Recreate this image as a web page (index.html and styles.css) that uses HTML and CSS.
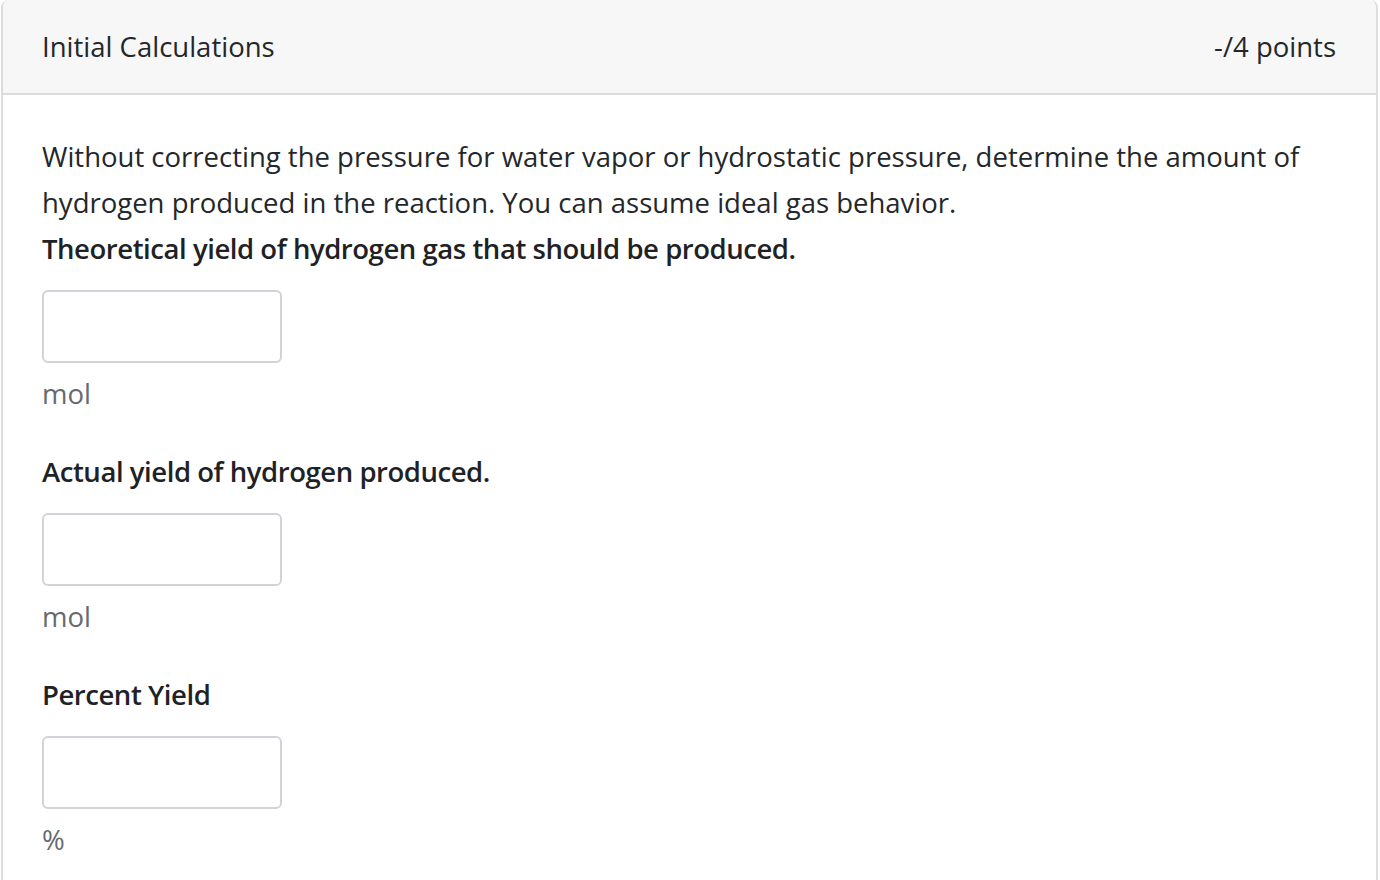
FILE: index.html
```html
<!DOCTYPE html>
<html>
<head>
<meta charset="utf-8">
<link rel="stylesheet" href="styles.css">
</head>
<body>
<div class="card">
  <div class="card-header">
    <span class="title">Initial Calculations</span>
    <span class="points">-/4 points</span>
  </div>
  <div class="card-body">
    <p class="prompt">Without correcting the pressure for water vapor or hydrostatic pressure, determine the amount of hydrogen produced in the reaction. You can assume ideal gas behavior.</p>
    <div class="question">
      <div class="label">Theoretical yield of hydrogen gas that should be produced.</div>
      <input class="answer" type="text">
      <div class="unit">mol</div>
    </div>
    <div class="question">
      <div class="label">Actual yield of hydrogen produced.</div>
      <input class="answer" type="text">
      <div class="unit">mol</div>
    </div>
    <div class="question">
      <div class="label">Percent Yield</div>
      <input class="answer" type="text">
      <div class="unit">%</div>
    </div>
  </div>
</div>
</body>
</html>
```
FILE: styles.css
```css
html, body {
  margin: 0;
  padding: 0;
  background: #ffffff;
}
body {
  font-family: "Open Sans", "Noto Sans", sans-serif;
  color: #24272a;
  font-size: 27.5px;
  line-height: 46px;
  font-variant-ligatures: none;
}
.card {
  margin: 0 2px 0 1px;
  border: 2px solid #dcdcdc;
  border-top: none;
  border-bottom: none;
  height: 900px;
  box-sizing: border-box;
  border-top-left-radius: 8px;
  border-top-right-radius: 8px;
}
.card-header {
  display: flex;
  justify-content: space-between;
  align-items: center;
  height: 93px;
  padding: 0 40px 0 39px;
  background: #f7f7f7;
  border-bottom: 2px solid #dcdcdc;
  border-top-left-radius: 8px;
  border-top-right-radius: 8px;
}
.card-body {
  padding: 39px 40px 0 39px;
}
.prompt {
  margin: 0;
}
.label {
  font-weight: 600;
  letter-spacing: -0.45px;
  color: #1f2225;
}
.answer {
  display: block;
  box-sizing: border-box;
  width: 240px;
  height: 73px;
  margin: 18px 0 8px 0;
  border: 2px solid #d0d4d8;
  border-radius: 6px;
  background: #fff;
  font-size: 20px;
  outline: none;
}
.unit {
  color: #666a6e;
  margin-bottom: 32px;
}
```
